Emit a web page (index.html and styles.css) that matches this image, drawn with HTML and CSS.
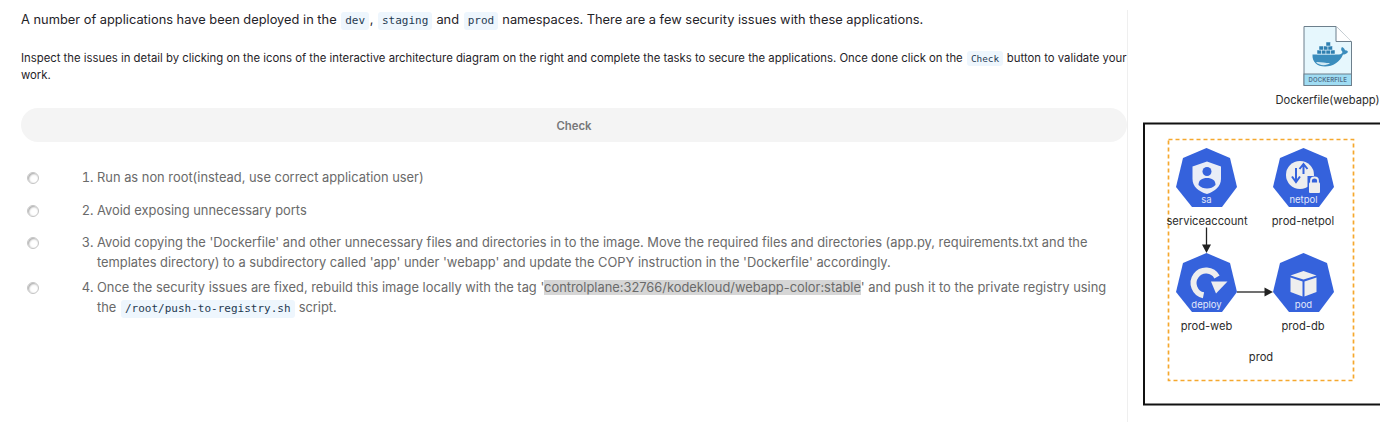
FILE: index.html
```html
<!DOCTYPE html>
<html lang="en">
<head>
<meta charset="utf-8">
<title>Secure the applications</title>
<link rel="stylesheet" href="styles.css">
</head>
<body>
<div class="layout">
  <main class="content">
    <p class="lead">A number of applications have been deployed in the <code class="chip">dev</code>, <code class="chip">staging</code> and <code class="chip">prod</code> namespaces. There are a few security issues with these applications.</p>
    <p class="intro">Inspect the issues in detail by clicking on the icons of the interactive architecture diagram on the right and complete the tasks to secure the applications. Once done click on the <code class="chip chip-small">Check</code> button to validate your work.</p>
    <button class="check" type="button">Check</button>
    <div class="tasks">
      <div class="task"><span class="radio"></span><ol class="task-text" start="1"><li>Run as non root(instead, use correct application user)</li></ol></div>
      <div class="task"><span class="radio"></span><ol class="task-text" start="2"><li>Avoid exposing unnecessary ports</li></ol></div>
      <div class="task"><span class="radio"></span><ol class="task-text" start="3"><li>Avoid copying the 'Dockerfile' and other unnecessary files and directories in to the image. Move the required files and directories (app.py, requirements.txt and the templates directory) to a subdirectory called 'app' under 'webapp' and update the COPY instruction in the 'Dockerfile' accordingly.</li></ol></div>
      <div class="task"><span class="radio"></span><ol class="task-text" start="4"><li>Once the security issues are fixed, rebuild this image locally with the tag '<mark class="selected">controlplane:32766/kodekloud/webapp-color:stable</mark>' and push it to the private registry using the <code class="chip">/root/push-to-registry.sh</code> script.</li></ol></div>
    </div>
  </main>
  <aside class="diagram">
    <svg class="canvas" width="252" height="412" viewBox="1128 10 252 412" xmlns="http://www.w3.org/2000/svg">
      <defs>
        <polygon id="hept" points="30.5,0 54,10 61,39 46,59 16,59 0,39 7,10" fill="#3562dc"/>
      </defs>

      <!-- Dockerfile -->
      <g>
        <path d="M1304 26.5H1336L1351.5 42V85.5H1304Z" fill="#e6f7fd" stroke="#6d7f8c" stroke-width="1"/>
        <path d="M1336 26.5V41.5H1351.5" fill="#fff" stroke="#6d7f8c" stroke-width="1"/>
        <rect x="1304" y="74" width="47.5" height="11.5" fill="#9fdcf3" stroke="#6d7f8c" stroke-width="1"/>
        <text class="doc-tag" x="1327.7" y="82">DOCKERFILE</text>
        <path d="M1312.5 54.5H1339C1341 54.5 1342 53.5 1342.5 52C1340.5 50 1341 48 1342 47C1344 48 1345 49.500 1345 50.500C1346.500 50 1347.500 51 1348 52C1346.500 54 1344.500 54.500 1343 54.500C1340 62 1333 66.500 1325 66.500C1317 66.500 1312 62 1312.500 54.500Z" fill="#3b8dbd"/>
        <path d="M1316 62C1320 61.500 1325 63 1330 63C1327 66 1319 66 1316 62Z" fill="#cfe8f3"/>
        <g fill="#2f7fb0" stroke="#e6f7fd" stroke-width=".5">
          <rect x="1317" y="50" width="4.500" height="4"/><rect x="1321.500" y="50" width="4.500" height="4"/><rect x="1326" y="50" width="4.500" height="4"/><rect x="1330.500" y="50" width="4.500" height="4"/>
          <rect x="1319" y="46" width="4.500" height="4"/><rect x="1323.500" y="46" width="4.500" height="4"/><rect x="1328" y="46" width="4.500" height="4"/>
          <rect x="1326" y="42" width="4.500" height="4"/>
        </g>
      </g>
      <text class="label" x="1327.500" y="103.500">Dockerfile(webapp)</text>

      <!-- Frames -->
      <rect class="frame" x="1144" y="123.500" width="260" height="281"/>
      <rect class="namespace" x="1168.500" y="139.500" width="185" height="241"/>

      <!-- Service account -->
      <g transform="translate(1176 148)">
        <use href="#hept"/>
        <path d="M31 13.500L45 18.500V31C45 38 39 43.500 31 46C22 43.500 16.500 38 16.500 31V18.500Z" fill="#e9edf7"/>
        <circle cx="31" cy="23.500" r="4.500" fill="#3562dc"/>
        <path d="M22.500 37C22.500 32 26 30 31 30C36 30 39.500 32 39.500 37C37.500 39.500 34 40.500 31 40.500C28 40.500 24.500 39.500 22.500 37Z" fill="#3562dc"/>
        <text class="badge" x="30.500" y="55">sa</text>
      </g>
      <text class="label" x="1207" y="224.500">serviceaccount</text>

      <!-- Network policy -->
      <g transform="translate(1273 148)">
        <use href="#hept"/>
        <circle cx="27" cy="27" r="14" fill="#eeeeee"/>
        <path d="M30.500 26V17M26.500 21L30.500 16L34.500 21" fill="none" stroke="#3562dc" stroke-width="2"/>
        <path d="M23 20V33M19 28.500L23 34L27 28.500" fill="none" stroke="#3562dc" stroke-width="2"/>
        <rect x="34.500" y="28" width="13" height="18" fill="#3562dc"/>
        <path d="M38 35V32.500C38 28.500 45 28.500 45 32.500V35" fill="none" stroke="#eeeeee" stroke-width="1.800"/>
        <rect x="36" y="34.500" width="11" height="10.500" rx="1" fill="#eeeeee"/>
        <text class="badge" x="30.500" y="55">netpol</text>
      </g>
      <text class="label" x="1303" y="224.500">prod-netpol</text>

      <!-- Deployment -->
      <g transform="translate(1176 253)">
        <use href="#hept"/>
        <path d="M27.500 42.300A12.500 12.500 0 1 1 41 24" fill="none" stroke="#eeeeee" stroke-width="6"/>
        <path d="M35 28.500H51.500L40 40.500Z" fill="#eeeeee"/>
        <text class="badge" x="30.500" y="55">deploy</text>
      </g>
      <text class="label" x="1206.500" y="329.500">prod-web</text>

      <!-- Pod -->
      <g transform="translate(1273 253)">
        <use href="#hept"/>
        <path d="M30.500 18L43.500 22.500L30.500 26.500L17.500 22.500Z" fill="#eeeeee"/>
        <path d="M17.500 24.500L29.500 28.500V43.500L17.500 39Z" fill="#eeeeee"/>
        <path d="M43.500 24.500L31.500 28.500V43.500L43.500 39Z" fill="#eeeeee"/>
        <text class="badge" x="30.500" y="55">pod</text>
      </g>
      <text class="label" x="1303" y="329.500">prod-db</text>

      <text class="label" x="1261" y="360.500">prod</text>

      <!-- Arrows -->
      <path class="edge" d="M1206.500 227.500V246"/>
      <path class="head" d="M1202 244.500H1211L1206.500 253Z"/>
      <path class="edge" d="M1237 292H1266"/>
      <path class="head" d="M1264.500 287.500V296.500L1273 292Z"/>
    </svg>
  </aside>
</div>
</body>
</html>
```
FILE: styles.css
```css
* { box-sizing: border-box; }

html, body {
  margin: 0;
  height: 100%;
  background: #fff;
  overflow: hidden;
}

body {
  font-family: Inter, "Liberation Sans", sans-serif;
  color: #1f2328;
}

.layout {
  display: flex;
  align-items: stretch;
  height: 422px;
  padding-top: 10px;
}

.content {
  width: 1128px;
  flex: none;
  padding: 0 0 0 21px;
  border-right: 1px solid #efefef;
}

.lead {
  margin: 1px 0 0;
  font-size: 12.85px;
  line-height: 18px;
}

.intro {
  margin: 20px 0 0;
  font-size: 11.33px;
  line-height: 17px;
}

.chip {
  display: inline-block;
  padding: 0 4px;
  margin: 0 .5px 0 1px;
  border-radius: 3px;
  background: #eef6fd;
  color: #1f3a52;
  font-family: "DejaVu Sans Mono", "Liberation Mono", monospace;
  font-size: 11px;
  line-height: 18px;
}

.chip-small {
  font-size: 9.4px;
  line-height: 15px;
}

.check {
  display: block;
  width: 100%;
  height: 34px;
  margin: 24px 0 0;
  padding: 1px 0 0;
  border: 0;
  border-radius: 17px;
  background: #f4f4f4;
  color: #77787a;
  font-family: inherit;
  font-size: 11.35px;
  font-weight: 600;
}

.tasks {
  margin-top: 26px;
  color: #6a6a6a;
  font-size: 12.89px;
  line-height: 19.5px;
}

.task {
  display: flex;
  min-height: 32.5px;
  padding-bottom: 6px;
}

.radio {
  flex: none;
  width: 12px;
  height: 12px;
  margin: 4px 0 0 6px;
  border: 1px solid #c4c4c4;
  border-radius: 50%;
  background: #fff;
  box-shadow: inset 1px 1px 2px rgba(0, 0, 0, .35);
}

.task-text {
  flex: 1;
  margin: 0;
  padding: 0 18px 0 58px;
}

.selected {
  background: #d6d6d6;
  color: inherit;
}

.diagram {
  flex: 1;
  min-width: 0;
}

.canvas {
  display: block;
}

.label {
  fill: #2b2b2b;
  font-size: 11.15px;
  text-anchor: middle;
}

.badge {
  fill: #e2e8fa;
  font-size: 9.5px;
  text-anchor: middle;
}

.doc-tag {
  fill: #52708a;
  font-size: 6px;
  font-weight: 600;
  letter-spacing: .1px;
  text-anchor: middle;
}

.frame {
  fill: none;
  stroke: #111;
  stroke-width: 2;
}

.namespace {
  fill: none;
  stroke: #f5a82e;
  stroke-width: 1.7;
  stroke-dasharray: 4 3;
}

.edge {
  fill: none;
  stroke: #222;
  stroke-width: 1.3;
}

.head {
  fill: #222;
}
```
